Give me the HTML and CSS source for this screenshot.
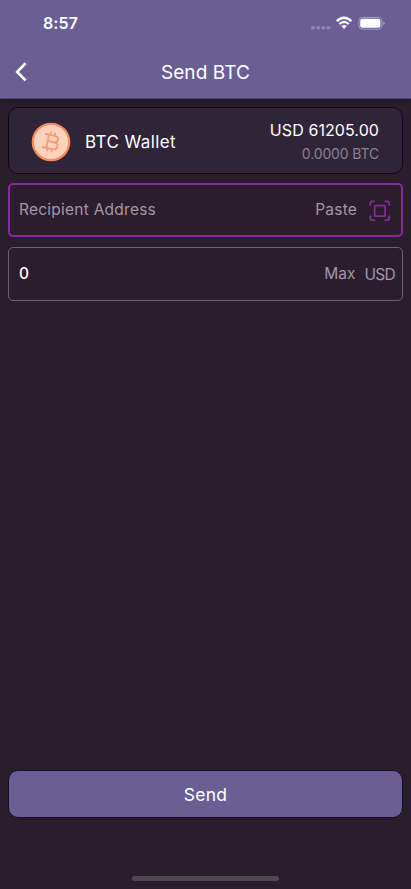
FILE: index.html
```html
<!DOCTYPE html>
<html lang="en">
<head>
<meta charset="utf-8">
<meta name="viewport" content="width=device-width, initial-scale=1">
<title>Send BTC</title>
<link rel="stylesheet" href="styles.css">
</head>
<body>
<div class="screen">
  <header class="header">
    <div class="status">
      <span class="time">8:57</span>
      <svg class="status-icons" width="76" height="16" viewBox="0 0 76 16">
        <g fill="#8d84b0"><rect x="1" y="11" width="4" height="3.5" rx="1.5"/><rect x="6.2" y="11" width="4" height="3.5" rx="1.5"/><rect x="11.4" y="11" width="4" height="3.5" rx="1.5"/><rect x="16.4" y="11" width="4" height="3.5" rx="1.5"/></g>
        <g fill="none" stroke="#fff" stroke-width="2.3"><path d="M26.8 6.2Q34.1 -.6 41.4 6.2"/><path d="M29.4 9Q34.1 4.7 38.8 9"/></g>
        <path d="M31.4 11.1Q34.1 8.8 36.8 11.1L34.1 14Z" fill="#fff"/>
        <rect x="48.9" y="2.4" width="23" height="11.8" rx="3.4" fill="none" stroke="#a49cc1"/>
        <rect x="50.2" y="3.8" width="20.2" height="9" rx="2" fill="#fff"/>
        <path d="M73.2 6.4Q74.8 7 74.8 8.3T73.2 10.2Z" fill="#a49cc1"/>
      </svg>
    </div>
    <div class="nav">
      <svg class="back" width="14" height="22" viewBox="0 0 14 22"><path d="M11.6 2.2L3.2 10.9L11.6 19.4" fill="none" stroke="#fff" stroke-width="2.7"/></svg>
      <h1 class="title">Send BTC</h1>
    </div>
  </header>
  <main class="content">
    <section class="wallet">
      <svg class="coin" width="40" height="40" viewBox="0 0 40 40">
        <circle cx="20" cy="20" r="18.2" fill="#ffd2bd" stroke="#f48b5d" stroke-width="2.2"/>
        <g transform="rotate(12 20 20)" fill="none" stroke="#f59a72" stroke-width="1.8" stroke-linecap="round" stroke-linejoin="round">
          <path d="M13 13.2H22.3Q26.3 13.2 26.3 16.4T22.3 19.7H16.5M22.3 19.7Q27.3 19.7 27.3 23.2T22.5 26.7H13M16.5 13.2V26.7M18 10.6V13.2M22.3 10.6V13.2M18 26.7V29.3M22.3 26.7V29.3"/>
        </g>
      </svg>
      <span class="wallet-name">BTC Wallet</span>
      <div class="balance">
        <span class="fiat">USD 61205.00</span>
        <span class="crypto">0.0000 BTC</span>
      </div>
    </section>
    <div class="field field-focus">
      <span class="placeholder">Recipient Address</span>
      <span class="paste">Paste</span>
      <svg class="scan" width="22" height="22" viewBox="0 0 22 22" fill="none" stroke="#892a9c" stroke-width="1.7"><path d="M1.3 6V2.8Q1.3 1.3 2.8 1.3H6M15.5 1.3H18.7Q20.2 1.3 20.2 2.8V6M20.2 15.5V18.7Q20.2 20.2 18.7 20.2H15.5M6 20.2H2.8Q1.3 20.2 1.3 18.7V15.5"/><rect x="5.7" y="5.7" width="10.4" height="10.4" rx=".8"/></svg>
    </div>
    <div class="field">
      <span class="amount">0</span>
      <span class="max">Max</span>
      <span class="unit">USD</span>
    </div>
    <button class="send">Send</button>
  </main>
  <div class="home"></div>
</div>
</body>
</html>
```
FILE: styles.css
```css
* { box-sizing: border-box; }
body { margin: 0; background: #2a1e2d; font-family: Inter, "Liberation Sans", sans-serif; color: #fff; }
.screen { width: 100%; height: 889px; display: flex; flex-direction: column; overflow: hidden; }
.header { height: 99px; background: #695f95; border-bottom: 1px solid #514673; box-shadow: 0 1px 4px #1b1220; }
.status { height: 46px; padding: 0 25px 0 43px; display: flex; align-items: center; justify-content: space-between; }
.time { font-size: 16px; font-weight: 600; letter-spacing: .1px; }
.nav { height: 52px; display: grid; grid-template-columns: 50px 1fr 50px; align-items: center; }
.back { margin-left: 14px; }
.title { margin: 0; text-align: center; font-size: 19px; font-weight: 400; letter-spacing: .1px; }
.content { flex: 1; padding: 8px 8px 0; display: flex; flex-direction: column; }
.wallet { height: 67px; border: 1px solid #100817; border-radius: 10px; background: #302538; display: flex; align-items: center; padding: 3px 23px 0 22px; }
.wallet-name { margin-left: 14px; font-size: 17px; letter-spacing: .4px; }
.balance { margin-left: auto; display: flex; flex-direction: column; align-items: flex-end; gap: 4px; }
.fiat { font-size: 16px; line-height: 20px; letter-spacing: .08px; }
.crypto { font-size: 14px; line-height: 20px; letter-spacing: -.15px; color: #8b818f; }
.field { height: 54px; margin-top: 10px; padding: 0 7px 2px 11px; border: 1px solid #6b606d; border-radius: 5px; display: flex; align-items: center; font-size: 15.5px; color: #a298a5; }
.field-focus { margin-top: 9px; padding: 0 10px 2px 9px; border: 2px solid #892a9c; }
.placeholder { letter-spacing: .24px; }
.paste, .max { margin-left: auto; }
.paste { letter-spacing: .2px; }
.scan { margin-left: 12px; margin-top: 4px; }
.amount { color: #fff; font-size: 15.5px; font-weight: 500; margin-left: -1px; }
.unit { margin-left: 9px; margin-top: 2px; letter-spacing: -.7px; }
.send { margin-top: auto; height: 48px; padding: 0; border: 1px solid #140b25; border-radius: 10px; background: #695f95; color: #fff; font: 400 17.5px Inter, "Liberation Sans", sans-serif; letter-spacing: .2px; }
.home { width: 147px; height: 5px; margin: 58px auto 8px; border-radius: 3px; background: #4d494d; }
```
